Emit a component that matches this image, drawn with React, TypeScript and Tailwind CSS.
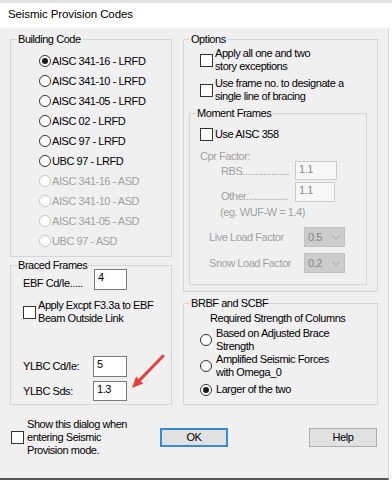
import type { ReactNode } from 'react';

function Radio({ checked, disabled }: { checked?: boolean; disabled?: boolean }) {
  return (
    <span
      className={`flex h-[12px] w-[12px] shrink-0 items-center justify-center rounded-full border bg-white ${
        disabled ? 'border-[#c8c8c8]' : 'border-[#333333]'
      }`}
    >
      {checked && <span className="h-[6px] w-[6px] rounded-full bg-[#1a1a1a]" />}
    </span>
  );
}

function Checkbox() {
  return <span className="block h-[13px] w-[13px] shrink-0 border border-[#333333] bg-white" />;
}

function Group({ title, className, children }: { title: string; className: string; children: ReactNode }) {
  return (
    <fieldset className={`border border-[#d5d5d5] ${className}`}>
      <legend className="ml-[6px] px-[1px] leading-[12px]">{title}</legend>
      {children}
    </fieldset>
  );
}

function Select({ value }: { value: string }) {
  return (
    <div className="flex h-[20px] w-[41px] shrink-0 items-center justify-between border border-[#c2c2c2] bg-[#cccccc] pl-[3px] pr-[4px] text-[#838383]">
      <span>{value}</span>
      <svg width="8" height="5" viewBox="0 0 8 5" fill="none">
        <path d="M0.5 0.5 L4 4 L7.5 0.5" stroke="#a5a5a5" strokeWidth="1" />
      </svg>
    </div>
  );
}

const buildingCodes = [
  { label: 'AISC 341-16 - LRFD', checked: true },
  { label: 'AISC 341-10 - LRFD' },
  { label: 'AISC 341-05 - LRFD' },
  { label: 'AISC 02 - LRFD' },
  { label: 'AISC 97 - LRFD' },
  { label: 'UBC 97 - LRFD' },
  { label: 'AISC 341-16 - ASD', disabled: true },
  { label: 'AISC 341-10 - ASD', disabled: true },
  { label: 'AISC 341-05 - ASD', disabled: true },
  { label: 'UBC 97 - ASD', disabled: true },
];

export default function App() {
  return (
    <div className="relative flex h-[480px] w-[392px] flex-col overflow-hidden bg-white font-['Liberation_Sans',Arial,sans-serif] text-[11px] leading-[13px] tracking-[-0.45px] text-black">
      <div className="h-[28px] shrink-0 border-t-[3px] border-[#e3e3e3] bg-white pl-[8px] pt-[5px] text-[11.5px] tracking-[-0.1px]">
        Seismic Provision Codes
      </div>

      <div className="mr-[3px] flex flex-1 flex-col border-r border-b-2 border-r-[#d9d9d9] border-b-[#555555] bg-[#f0f0f0]">
        <div className="flex gap-[11px] pl-[10px] pt-[5px]">
          {/* left column */}
          <div className="flex w-[162px] flex-col gap-[2px]">
            <Group title="Building Code" className="h-[224px]">
              <div className="flex flex-col pl-[28px] pt-[6px]">
                {buildingCodes.map((c) => (
                  <div key={c.label} className="flex h-[20px] items-center gap-[1px]">
                    <Radio checked={c.checked} disabled={c.disabled} />
                    <span className={c.disabled ? 'text-[#a0a0a0]' : ''}>{c.label}</span>
                  </div>
                ))}
              </div>
            </Group>

            <Group title="Braced Frames" className="h-[146px]">
              <div className="pl-[12px]">
                <div className="mt-[-2px] flex items-end">
                  <span className="w-[71px]">EBF Cd/Ie.....</span>
                  <div className="h-[21px] w-[33px] border border-[#7a7a7a] bg-white pl-[3px] pt-[1px]">4</div>
                </div>
                <div className="mt-[9px] flex items-center gap-[2px]">
                  <Checkbox />
                  <span>
                    Apply Excpt F3.3a to EBF
                    <br />
                    Beam Outside Link
                  </span>
                </div>
                <div className="mt-[31px] flex items-center">
                  <span className="w-[70px]">YLBC Cd/Ie:</span>
                  <div className="h-[21px] w-[34px] border border-[#7a7a7a] bg-white pl-[3px] pt-[1px]">5</div>
                </div>
                <div className="mt-[4px] flex items-center">
                  <span className="w-[70px]">YLBC Sds:</span>
                  <div className="h-[20px] w-[34px] border border-[#7a7a7a] bg-white pl-[3px] pt-[1px]">1.3</div>
                </div>
              </div>
            </Group>
          </div>

          {/* right column */}
          <div className="flex w-[195px] flex-col">
            <Group title="Options" className="h-[259px]">
              <div className="pl-[16px]">
                <div className="mt-[2px] flex items-center gap-[2px]">
                  <Checkbox />
                  <span>
                    Apply all one and two
                    <br />
                    story exceptions
                  </span>
                </div>
                <div className="mt-[4px] flex items-center gap-[2px]">
                  <Checkbox />
                  <span>
                    Use frame no. to designate a
                    <br />
                    single line of bracing
                  </span>
                </div>
              </div>

              <Group title="Moment Frames" className="ml-[5px] mt-[4px] h-[178px] w-[178px]">
                <div className="mt-[9px] flex items-center gap-[2px] pl-[10px]">
                  <Checkbox />
                  <span>Use AISC 358</span>
                </div>
                <div className="mt-[9px] pl-[10px] text-[#a0a0a0]">Cpr Factor:</div>
                <div className="mt-[-2px] flex items-start">
                  <span className="mt-[4px] w-[105px] whitespace-nowrap pl-[31px] text-[#a0a0a0]">RBS..................</span>
                  <div className="h-[19px] w-[42px] border border-[#cccccc] bg-[#f7f7f7] pl-[3px] pt-[1px] text-[#8a8a8a]">1.1</div>
                </div>
                <div className="mt-[2px] flex items-start">
                  <span className="mt-[8px] w-[105px] whitespace-nowrap pl-[31px] text-[#a0a0a0]">Other................</span>
                  <div className="h-[20px] w-[40px] border border-[#cccccc] bg-[#f7f7f7] pl-[3px] pt-[1px] text-[#8a8a8a]">1.1</div>
                </div>
                <div className="mt-[3px] pl-[30px] text-[#a0a0a0]">(eg. WUF-W = 1.4)</div>
                <div className="mt-[8px] flex items-start">
                  <span className="mt-[4px] w-[114px] pl-[19px] text-[#a0a0a0]">Live Load Factor</span>
                  <Select value="0.5" />
                </div>
                <div className="mt-[6px] flex items-start">
                  <span className="mt-[4px] w-[114px] pl-[19px] text-[#a0a0a0]">Snow Load Factor</span>
                  <Select value="0.2" />
                </div>
              </Group>
            </Group>

            <Group title="BRBF and SCBF" className="mt-[5px] h-[108px]">
              <div className="mt-[3px] pl-[26px]">Required Strength of Columns</div>
              <div className="mt-[2px] flex items-center gap-[4px] pl-[16px]">
                <Radio />
                <span>
                  Based on Adjusted Brace
                  <br />
                  Strength
                </span>
              </div>
              <div className="flex items-center gap-[4px] pl-[16px]">
                <Radio />
                <span>
                  Amplified Seismic Forces
                  <br />
                  with Omega_0
                </span>
              </div>
              <div className="mt-[4px] flex items-center gap-[4px] pl-[16px]">
                <Radio checked />
                <span>Larger of the two</span>
              </div>
            </Group>
          </div>
        </div>

        <div className="mt-[13px] flex items-center pl-[11px]">
          <div className="flex w-[149px] items-center gap-[3px]">
            <Checkbox />
            <span>
              Show this dialog when
              <br />
              entering Seismic
              <br />
              Provision mode.
            </span>
          </div>
          <button className="flex h-[19px] w-[68px] items-center justify-center border-2 border-[#3889d8] bg-[#e1e1e1]">
            OK
          </button>
          <button className="ml-[81px] flex h-[19px] w-[68px] items-center justify-center border border-[#adadad] bg-[#e1e1e1]">
            Help
          </button>
        </div>
      </div>

      {/* red annotation arrow */}
      <svg className="absolute left-[125px] top-[350px]" width="45" height="45" viewBox="0 0 45 45">
        <line x1="38" y1="6" x2="14.7" y2="30.1" stroke="#e2403f" strokeWidth="3" strokeLinecap="round" />
        <polygon points="7,38 18.3,33.6 11.1,26.6" fill="#e2403f" />
      </svg>
    </div>
  );
}
